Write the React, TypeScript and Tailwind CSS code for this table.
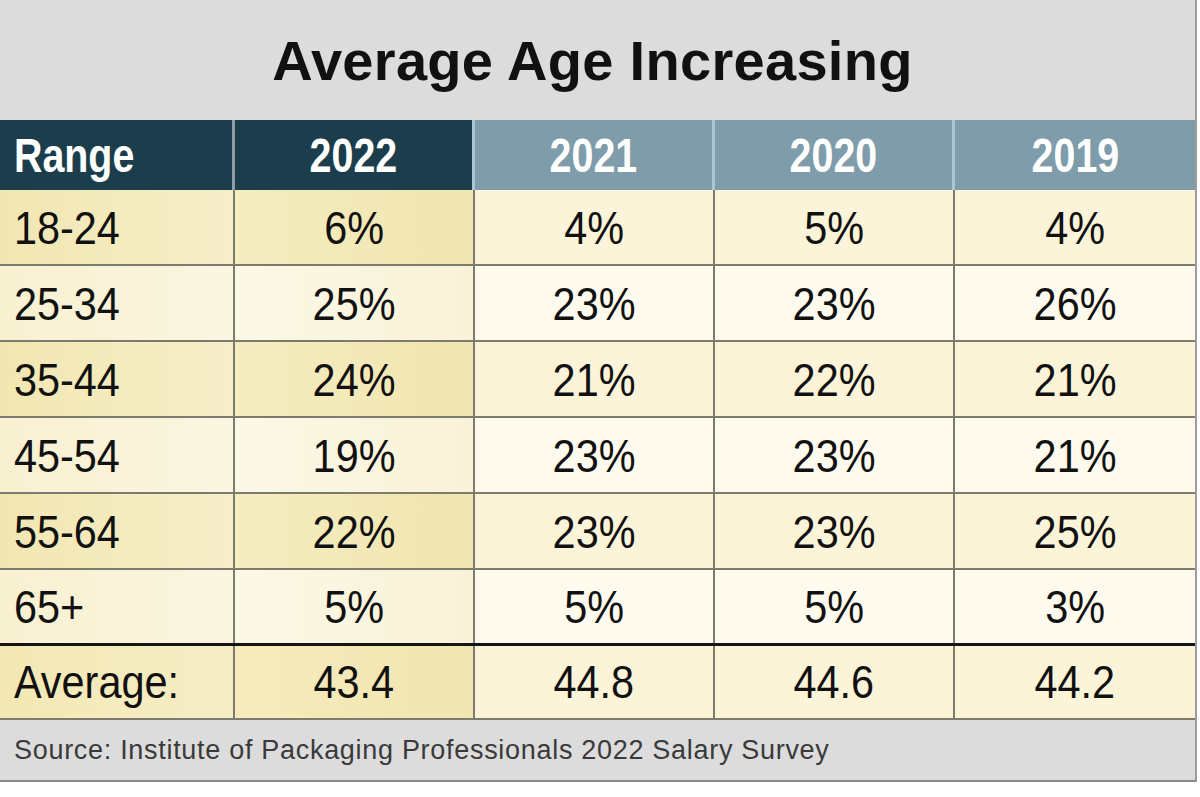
const years = ['2022', '2021', '2020', '2019'];

const rows = [
  { range: '18-24', values: ['6%', '4%', '5%', '4%'] },
  { range: '25-34', values: ['25%', '23%', '23%', '26%'] },
  { range: '35-44', values: ['24%', '21%', '22%', '21%'] },
  { range: '45-54', values: ['19%', '23%', '23%', '21%'] },
  { range: '55-64', values: ['22%', '23%', '23%', '25%'] },
  { range: '65+', values: ['5%', '5%', '5%', '3%'] },
];

const cellText = "font-['Liberation_Sans',Arial,sans-serif] text-[46px] text-[#111]";

// narrow helvetica look: squeeze the glyphs a bit
function Txt({ children, left }: { children: React.ReactNode; left?: boolean }) {
  return (
    <span className={`inline-block whitespace-nowrap scale-x-[0.9] ${left ? 'origin-left' : 'origin-center'}`}>
      {children}
    </span>
  );
}

function HeadTxt({ children, left }: { children: React.ReactNode; left?: boolean }) {
  return (
    <span className={`inline-block whitespace-nowrap scale-x-[0.82] ${left ? 'origin-left' : 'origin-center'}`}>
      {children}
    </span>
  );
}

function DataRow({ range, values, shaded, last }: { range: string; values: string[]; shaded: boolean; last?: boolean }) {
  const bottom = last ? 'border-b-[3px] border-b-[#151515]' : 'border-b-2 border-b-[#7d7b6e]';
  return (
    <div className={`grid grid-cols-[235px_240px_240px_240px_240px] h-[76px] ${bottom}`}>
      <div
        className={`flex items-center pl-[14px] pt-[2px] border-r-2 border-[#7d7b6e] ${cellText} ${
          shaded ? 'bg-linear-to-r from-[#f2e7b2] to-[#f6eec9]' : 'bg-linear-to-r from-[#f8f0d0] to-[#fbf6e2]'
        }`}
      >
        <Txt left>{range}</Txt>
      </div>
      <div
        className={`flex items-center justify-center pt-[2px] border-r-2 border-[#7d7b6e] ${cellText} ${
          shaded ? 'bg-linear-to-r from-[#f5ecc0] to-[#f1e6b0]' : 'bg-linear-to-r from-[#fcf8e6] to-[#f9f2d8]'
        }`}
      >
        <Txt>{values[0]}</Txt>
      </div>
      {values.slice(1).map((v, i) => (
        <div
          key={i}
          className={`flex items-center justify-center pt-[2px] ${i < 2 ? 'border-r-2 border-[#7d7b6e]' : ''} ${cellText} ${
            shaded ? 'bg-[#fbf4d9]' : 'bg-[#fefbee]'
          }`}
        >
          <Txt>{v}</Txt>
        </div>
      ))}
    </div>
  );
}

export default function App() {
  return (
    <div className="w-[1200px] h-[797px] bg-white">
      <div className="w-[1197px] bg-[#dcdcdc] border-r-2 border-[#9c9c9c]">
        <div className="h-[120px] flex items-center justify-center pr-[10px]">
          <h1 className="font-['Liberation_Sans',Arial,sans-serif] font-bold text-[56px] text-[#111] tracking-[0.3px] pt-[2px]">
            Average Age Increasing
          </h1>
        </div>

        <div className="grid grid-cols-[235px_240px_240px_240px_240px] h-[70px] border-b-2 border-[#263238] font-['Liberation_Sans',Arial,sans-serif] font-bold text-[48px] text-white">
          <div className="flex items-center pl-[14px] bg-[#1c3e4c] border-r-[3px] border-[#8d9ea4]">
            <HeadTxt left>Range</HeadTxt>
          </div>
          <div className="flex items-center justify-center bg-[#1c3e4c] border-r-[3px] border-[#a9c6d4]">
            <HeadTxt>{years[0]}</HeadTxt>
          </div>
          <div className="flex items-center justify-center bg-[#7e9ca9] border-r-[3px] border-[#a9c6d4]">
            <HeadTxt>{years[1]}</HeadTxt>
          </div>
          <div className="flex items-center justify-center bg-[#7e9ca9] border-r-[3px] border-[#a9c6d4]">
            <HeadTxt>{years[2]}</HeadTxt>
          </div>
          <div className="flex items-center justify-center bg-[#7e9ca9]">
            <HeadTxt>{years[3]}</HeadTxt>
          </div>
        </div>

        {rows.map((r, i) => (
          <DataRow key={r.range} range={r.range} values={r.values} shaded={i % 2 === 0} last={i === rows.length - 1} />
        ))}

        <div className="grid grid-cols-[235px_240px_240px_240px_240px] h-[74px] border-b-2 border-b-[#7d7b6e]">
          <div className={`flex items-center pl-[14px] border-r-2 border-[#7d7b6e] bg-linear-to-r from-[#f3e8b4] to-[#f6edc6] ${cellText}`}>
            <Txt left>Average:</Txt>
          </div>
          <div className={`flex items-center justify-center border-r-2 border-[#7d7b6e] bg-linear-to-r from-[#f5ebbd] to-[#f1e6b0] ${cellText}`}>
            <Txt>43.4</Txt>
          </div>
          <div className={`flex items-center justify-center border-r-2 border-[#7d7b6e] bg-[#fbf4d9] ${cellText}`}>
            <Txt>44.8</Txt>
          </div>
          <div className={`flex items-center justify-center border-r-2 border-[#7d7b6e] bg-[#fbf4d9] ${cellText}`}>
            <Txt>44.6</Txt>
          </div>
          <div className={`flex items-center justify-center bg-[#fbf4d9] ${cellText}`}>
            <Txt>44.2</Txt>
          </div>
        </div>

        <div className="h-[62px] flex items-center pl-[14px] border-b-2 border-[#8a8a8a] font-['Liberation_Sans',Arial,sans-serif] text-[27px] tracking-[0.7px] text-[#3a3a3a]">
          Source: Institute of Packaging Professionals 2022 Salary Survey
        </div>
      </div>
    </div>
  );
}
